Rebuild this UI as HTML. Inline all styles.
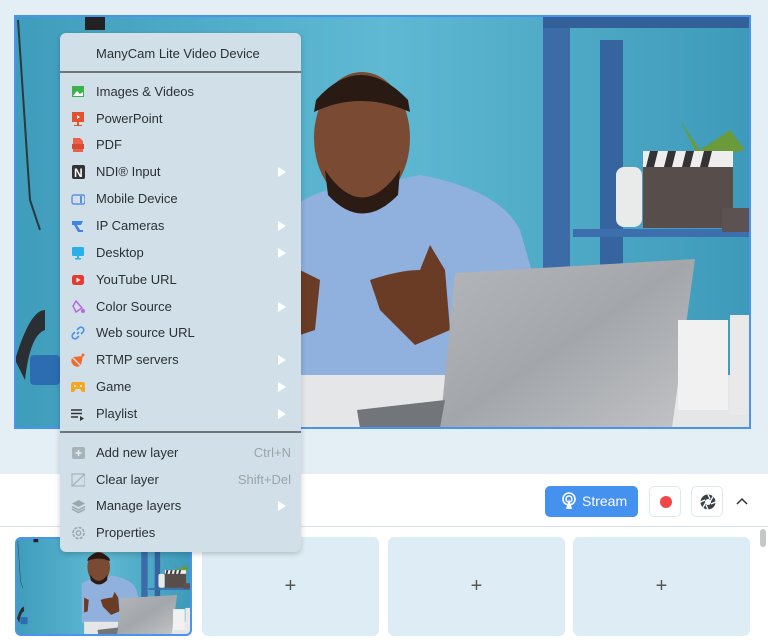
<!DOCTYPE html>
<html><head><meta charset="utf-8"><style>
*{margin:0;padding:0;box-sizing:border-box}
body{width:768px;height:644px;overflow:hidden;background:#fff;font-family:"Liberation Sans",sans-serif;position:relative}
.top{position:absolute;left:0;top:0;width:768px;height:474px;background:#e3eef5}
.bar{position:absolute;left:0;top:474px;width:768px;height:53px;background:#fff;border-bottom:1px solid #d6e0e6}
.slot{position:absolute;top:537px;width:177px;height:99px;background:#deedf5;border-radius:6px;display:flex;align-items:center;justify-content:center;font-size:20px;color:#555;font-weight:300}
.menu{position:absolute;left:60px;top:33px;width:241px;height:519px;background:#d1e0e8;border-radius:6px;box-shadow:0 2px 6px rgba(0,0,0,.2);font-size:13px;color:#2b3034}
.it{position:absolute;left:0;width:241px;height:26px;line-height:28px}
.it .t{position:absolute;left:36px}
.it .ic{position:absolute;left:11px;top:7px;width:14px;height:14px}
.it .ar{position:absolute;left:218px;top:9px;width:0;height:0;border-left:8px solid #fff;border-top:5px solid transparent;border-bottom:5px solid transparent}
.it .k{position:absolute;right:10px;color:#9aa4aa}
.sep{position:absolute;left:0;width:241px;height:2px;background:#6f7579}
.btn{position:absolute;top:486px;height:31px;border-radius:5px}
</style></head><body>
<div class="top"></div>
<svg width="768" height="644" style="position:absolute;left:0;top:0">
<defs>
<clipPath id="vc"><rect x="15" y="16" width="735" height="412"/></clipPath>
<linearGradient id="bg" x1="0" x2="1" y1="0" y2="0"><stop offset="0" stop-color="#3f9dbc"/><stop offset=".5" stop-color="#5fb9d3"/><stop offset="1" stop-color="#3d9ab9"/></linearGradient>
<linearGradient id="lp" x1="0" x2="1" y1="0" y2="1"><stop offset="0" stop-color="#b3b6ba"/><stop offset=".5" stop-color="#a3a6aa"/><stop offset="1" stop-color="#c2c4c7"/></linearGradient>
<g id="photo">
<rect x="15" y="16" width="735" height="412" fill="url(#bg)"/>
<rect x="543" y="16" width="27" height="340" fill="#3c6ca8"/>
<rect x="543" y="16" width="207" height="12" fill="#34609a"/>
<rect x="600" y="40" width="23" height="310" fill="#35649f"/>
<rect x="573" y="229" width="177" height="8" fill="#3d6eae"/>
<path d="M680 120 L700 150 L730 130 L745 150 L700 160Z" fill="#6a9a3a"/>
<rect x="643" y="151" width="90" height="77" fill="#574e4b"/>
<rect x="643" y="151" width="90" height="16" fill="#eee"/>
<path d="M650 151h8l-4 16h-8zM668 151h8l-4 16h-8zM686 151h8l-4 16h-8zM704 151h8l-4 16h-8z" fill="#333"/>
<rect x="616" y="167" width="26" height="60" rx="8" fill="#e9eaea"/>
<rect x="722" y="208" width="28" height="24" fill="#5b5251"/>
<path d="M18 20 L30 200 L40 230" stroke="#2a3a40" stroke-width="2" fill="none"/>
<rect x="85" y="16" width="20" height="14" fill="#222"/>
<path d="M15 360 Q30 310 45 310 L45 330 Q30 335 25 380Z" fill="#2b2f33"/>
<rect x="30" y="355" width="30" height="30" rx="4" fill="#2b6db0"/>
<path d="M290 210 Q320 185 350 190 L420 175 Q500 190 520 230 L540 300 L535 380 L290 380Z" fill="#90b0dd"/>
<ellipse cx="362" cy="138" rx="48" ry="66" fill="#7a4a33"/>
<path d="M316 100 Q360 50 408 100 L410 112 Q360 90 314 112Z" fill="#2a1a14"/>
<path d="M325 170 Q362 225 400 170 L398 195 Q362 232 328 195Z" fill="#2b1b14"/>
<path d="M370 280 Q400 270 420 270 L430 245 L445 270 L450 330 L415 345 L380 310 Z" fill="#6b3c25"/>
<path d="M300 270 L320 280 L315 330 L300 335Z" fill="#6b3c25"/>
<rect x="300" y="375" width="450" height="53" fill="#e4e6e8"/>
<path d="M455 273 L695 259 L672 428 L440 428Z" fill="url(#lp)"/>
<path d="M357 410 L445 400 L440 428 L360 428Z" fill="#727579"/>
<rect x="678" y="320" width="50" height="90" fill="#f1f1f1"/>
<rect x="730" y="315" width="20" height="100" fill="#e9e9e9"/>
</g>
</defs>
<use href="#photo" clip-path="url(#vc)"/>
<rect x="15" y="16" width="735" height="412" fill="none" stroke="#4a93ee" stroke-width="2"/>
<clipPath id="tc"><rect x="15" y="16" width="735" height="412"/></clipPath>
<g transform="translate(17,539) scale(.2354,.2306) translate(-15,-16)"><use href="#photo" clip-path="url(#tc)"/></g>
</svg>
<div class="bar"></div>
<div class="slot" style="left:15px;background:none;border:2px solid #4a93ee;border-radius:6px;pointer-events:none"></div>
<div class="slot" style="left:202px">+</div>
<div class="slot" style="left:388px">+</div>
<div class="slot" style="left:573px">+</div>
<div style="position:absolute;left:760px;top:529px;width:6px;height:18px;border-radius:3px;background:#c4c8cb"></div>
<div class="btn" style="left:545px;width:93px;background:#4591f0;color:#fff;font-size:14px;line-height:31px"><svg width="16" height="18" style="position:absolute;left:16px;top:6px" viewBox="0 0 16 18"><circle cx="8" cy="7" r="6" fill="none" stroke="#fff" stroke-width="1.6"/><circle cx="8" cy="7" r="3" fill="none" stroke="#fff" stroke-width="1.4"/><path d="M8 7 L5 17 H11Z" fill="#fff"/></svg><span style="position:absolute;left:37px">Stream</span></div>
<div class="btn" style="left:649px;width:32px;border:1px solid #dfe8ee;background:#fff"><div style="position:absolute;left:10px;top:9px;width:12px;height:12px;border-radius:50%;background:#f04848"></div></div>
<div class="btn" style="left:691px;width:32px;border:1px solid #dfe8ee;background:#fff"><svg width="18" height="18" style="position:absolute;left:7px;top:6px" viewBox="0 0 18 18"><circle cx="9" cy="9" r="7.5" fill="#3a4247"/><circle cx="9" cy="9" r="3" fill="#fff"/><path d="M9 1.5 L11 6 M16.5 9 L12 11 M9 16.5 L7 12 M1.5 9 L6 7 M14 3.5 L11.5 8 M4 14.5 L6.5 10" stroke="#fff" stroke-width="1.3"/></svg></div>
<svg width="12" height="8" style="position:absolute;left:736px;top:497px"><path d="M1 7 L6 2 L11 7" stroke="#333" stroke-width="1.5" fill="none"/></svg>

<div class="menu">
<div class="it" style="top:7px"><span class="t">ManyCam Lite Video Device</span></div>
<div class="sep" style="top:38px"></div>
<div class="it" style="top:45px"><svg class="ic"><rect x="1" y="1" width="12" height="11" fill="#3bb34a"/><path d="M2 11 L6 6 L9 9 L12 7 V11Z" fill="#fff"/></svg><span class="t">Images &amp; Videos</span></div>
<div class="it" style="top:72px"><svg class="ic"><rect x="1" y="0" width="12" height="10" fill="#e4532f"/><path d="M6 3 L9 5 L6 7Z" fill="#fff"/><rect x="6" y="10" width="2" height="3" fill="#e4532f"/><rect x="3" y="13" width="8" height="1.5" fill="#e4532f"/></svg><span class="t">PowerPoint</span></div>
<div class="it" style="top:98px"><svg class="ic"><path d="M2 0 H9 L12 3 V14 H2Z" fill="#e8634a"/><rect x="1" y="6" width="12" height="5" fill="#d44a33"/></svg><span class="t">PDF</span></div>
<div class="it" style="top:125px"><svg class="ic"><rect x="1" y="0" width="13" height="14" rx="2" fill="#333"/><text x="3" y="12" font-size="12" font-weight="bold" fill="#fff" font-family="Liberation Sans">N</text></svg><span class="t">NDI® Input</span><i class="ar"></i></div>
<div class="it" style="top:152px"><svg class="ic"><rect x="1" y="3" width="13" height="9" rx="2" fill="none" stroke="#5b8fe0" stroke-width="1.4"/><rect x="9" y="4" width="2" height="7" fill="#5b8fe0"/></svg><span class="t">Mobile Device</span></div>
<div class="it" style="top:179px"><svg class="ic"><path d="M1 2 H12 L10 6 H6 L9 11 H12 V13 H7 L3 6 H1Z" fill="#3f84e6"/></svg><span class="t">IP Cameras</span><i class="ar"></i></div>
<div class="it" style="top:206px"><svg class="ic"><rect x="1" y="1" width="12" height="9" rx="1" fill="#29b0e8"/><rect x="6" y="10" width="2" height="2" fill="#29b0e8"/><rect x="4" y="12" width="6" height="1.5" fill="#29b0e8"/></svg><span class="t">Desktop</span><i class="ar"></i></div>
<div class="it" style="top:233px"><svg class="ic"><rect x="1" y="2" width="12" height="10" rx="2.5" fill="#e53a2f"/><path d="M5.5 4.5 L9.5 7 L5.5 9.5Z" fill="#fff"/></svg><span class="t">YouTube URL</span></div>
<div class="it" style="top:260px"><svg class="ic"><path d="M5 1 L11 8 L5 12 L2 6Z" fill="none" stroke="#b967e0" stroke-width="1.5"/><circle cx="12" cy="11" r="2" fill="#b967e0"/></svg><span class="t">Color Source</span><i class="ar"></i></div>
<div class="it" style="top:286px"><svg class="ic"><path d="M6 8 L8 6 M4 6 L2 8 A2.5 2.5 0 0 0 6 12 L8 10 M10 8 L12 6 A2.5 2.5 0 0 0 8 2 L6 4" stroke="#4d90ea" stroke-width="1.6" fill="none"/></svg><span class="t">Web source URL</span></div>
<div class="it" style="top:313px"><svg class="ic"><path d="M1 5 A6 6 0 0 0 9 13 Z" fill="#f26b2c"/><path d="M2 4 L10 12 L12 3Z" fill="#f26b2c"/><circle cx="12" cy="2" r="1.5" fill="#f26b2c"/></svg><span class="t">RTMP servers</span><i class="ar"></i></div>
<div class="it" style="top:340px"><svg class="ic"><path d="M2 2 H12 Q14 2 14 5 V12 H11 L9 9 H5 L3 12 H0 V5 Q0 2 2 2Z" fill="#f5a623"/><circle cx="4" cy="6" r="1" fill="#fff"/><circle cx="10" cy="6" r="1" fill="#fff"/></svg><span class="t">Game</span><i class="ar"></i></div>
<div class="it" style="top:367px"><svg class="ic"><path d="M0 3H11M0 6.5H11M0 10H7" stroke="#333" stroke-width="1.4"/><path d="M9 9 L13 11.5 L9 14Z" fill="#333"/></svg><span class="t">Playlist</span><i class="ar"></i></div>
<div class="sep" style="top:398px"></div>
<div class="it" style="top:406px"><svg class="ic"><rect x="1" y="1" width="13" height="12" rx="2" fill="#a6b4ba"/><path d="M7.5 4V10M4.5 7H10.5" stroke="#e8eef0" stroke-width="1.5"/></svg><span class="t">Add new layer</span><span class="k">Ctrl+N</span></div>
<div class="it" style="top:433px"><svg class="ic"><rect x="1" y="1" width="13" height="12" fill="none" stroke="#a6b4ba" stroke-width="1.2"/><path d="M1 13 L14 1" stroke="#a6b4ba" stroke-width="1.2"/></svg><span class="t">Clear layer</span><span class="k">Shift+Del</span></div>
<div class="it" style="top:459px"><svg class="ic"><path d="M7.5 1 L14 4.5 L7.5 8 L1 4.5Z" fill="#9aa8ae"/><path d="M1 7.5 L7.5 11 L14 7.5 M1 10 L7.5 13.5 L14 10" stroke="#9aa8ae" stroke-width="1.5" fill="none"/></svg><span class="t">Manage layers</span><i class="ar"></i></div>
<div class="it" style="top:486px"><svg class="ic"><circle cx="7.5" cy="7" r="5.5" fill="none" stroke="#98a5ab" stroke-width="1.6" stroke-dasharray="3 1.3"/><circle cx="7.5" cy="7" r="2.2" fill="none" stroke="#98a5ab" stroke-width="1.3"/></svg><span class="t">Properties</span></div>
</div>
</body></html>
